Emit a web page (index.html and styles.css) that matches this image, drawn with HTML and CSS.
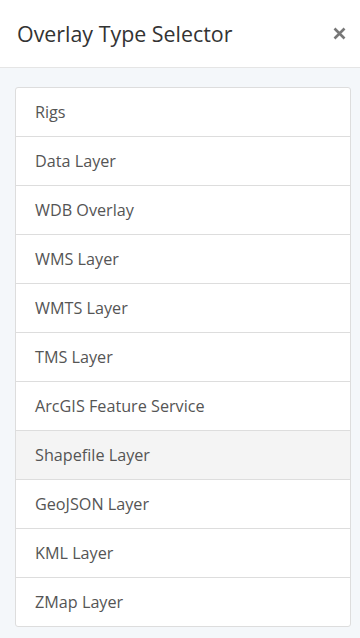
FILE: index.html
```html
<!DOCTYPE html>
<html>
<head>
<meta charset="utf-8">
<link rel="stylesheet" href="styles.css">
</head>
<body>
<div class="modal">
  <div class="header">
    <h4 class="title">Overlay Type Selector</h4>
    <button class="close" aria-label="Close">
      <svg width="13" height="13" viewBox="0 0 13 13"><path d="M1.5 1.5 L11.5 11.5 M11.5 1.5 L1.5 11.5" stroke="#777" stroke-width="2.6" stroke-linecap="butt"/></svg>
    </button>
  </div>
  <div class="body">
    <ul class="list">
      <li class="item">Rigs</li>
      <li class="item">Data Layer</li>
      <li class="item">WDB Overlay</li>
      <li class="item">WMS Layer</li>
      <li class="item">WMTS Layer</li>
      <li class="item">TMS Layer</li>
      <li class="item">ArcGIS Feature Service</li>
      <li class="item active">Shapefile Layer</li>
      <li class="item">GeoJSON Layer</li>
      <li class="item">KML Layer</li>
      <li class="item">ZMap Layer</li>
    </ul>
  </div>
</div>
</body>
</html>
```
FILE: styles.css
```css
html, body {
  margin: 0;
  padding: 0;
  height: 100%;
}
body {
  font-family: "Open Sans", "Liberation Sans", sans-serif;
  background: #f4f7fa;
}
.modal {
  display: flex;
  flex-direction: column;
  min-height: 100%;
}
.header {
  height: 68px;
  box-sizing: border-box;
  background: #fff;
  border-bottom: 1px solid #e5e5e5;
  display: flex;
  align-items: center;
  justify-content: space-between;
  padding: 0 14px 0 17px;
}
.title {
  margin: 0;
  font-size: 21.4px;
  font-weight: 400;
  color: #333;
  line-height: 28px;
}
.close {
  border: 0;
  background: none;
  padding: 0;
  width: 13px;
  height: 13px;
  display: flex;
  cursor: pointer;
}
.body {
  padding: 19px 9px 12px 15px;
}
.list {
  list-style: none;
  margin: 0;
  padding: 0;
  border: 1px solid #ddd;
  border-radius: 3px;
  background: #fff;
}
.item {
  height: 48px;
  box-sizing: content-box;
  display: flex;
  align-items: center;
  padding: 0 19px;
  font-size: 16.2px;
  color: #555;
  border-top: 1px solid #ddd;
}
.item:first-child {
  border-top: 0;
}
.item.active {
  background: #f4f4f4;
}
```
